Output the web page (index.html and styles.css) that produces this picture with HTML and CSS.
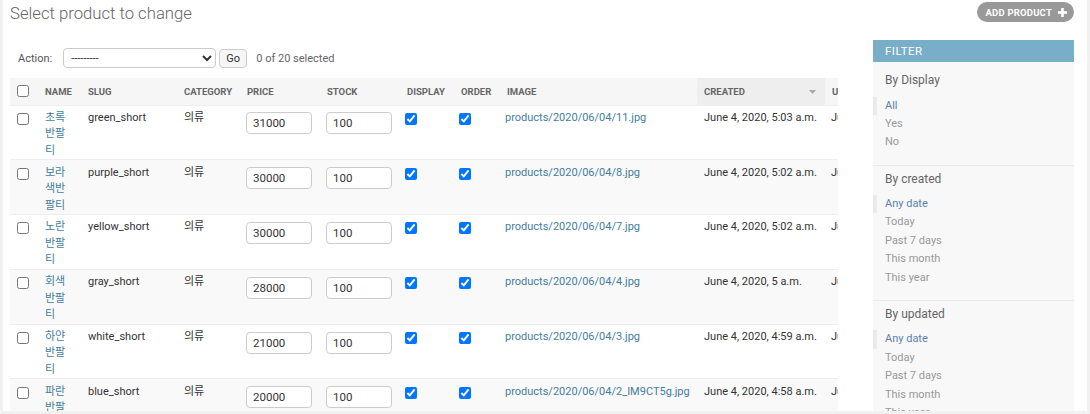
FILE: index.html
```html
<!DOCTYPE html>
<html lang="en">
<head>
<meta charset="utf-8">
<title>Select product to change</title>
<link rel="stylesheet" href="styles.css">
</head>
<body>
<div class="page">
  <div class="topbar">
    <h1 class="title">Select product to change</h1>
    <a class="addlink" href="#">ADD PRODUCT
      <svg class="plus" width="9" height="9" viewBox="0 0 9 9"><rect x="3.2" y="0" width="2.6" height="9" fill="#fff"/><rect x="0" y="3.2" width="9" height="2.6" fill="#fff"/></svg>
    </a>
  </div>
  <div class="main">
    <div class="changelist">
      <div class="actions">
        <label class="action-label">Action:</label>
        <select class="action-select"><option>---------</option></select>
        <button class="go">Go</button>
        <span class="count">0 of 20 selected</span>
      </div>
      <div class="results">
        <table class="result-list">
          <colgroup>
            <col class="c-check"><col class="c-name"><col class="c-slug"><col class="c-cat"><col class="c-price"><col class="c-stock"><col class="c-disp"><col class="c-order"><col class="c-image"><col class="c-created"><col class="c-updated">
          </colgroup>
          <thead>
            <tr>
              <th><input type="checkbox" class="cb"></th>
              <th>Name</th>
              <th>Slug</th>
              <th>Category</th>
              <th>Price</th>
              <th>Stock</th>
              <th>Display</th>
              <th>Order</th>
              <th>Image</th>
              <th class="sorted"><div class="sorted-inner"><span>Created</span><svg width="7" height="4" viewBox="0 0 7 4"><path d="M0 0H7L3.5 4Z" fill="#aaa"/></svg></div></th>
              <th>Updated</th>
            </tr>
          </thead>
          <tbody>
            <tr>
              <td><input type="checkbox" class="cb row-cb"></td>
              <td><a class="link name" href="#">초록 반팔 티</a></td>
              <td>green_short</td>
              <td>의류</td>
              <td><input class="num" type="text" value="31000"></td>
              <td><input class="num" type="text" value="100"></td>
              <td><input type="checkbox" class="cb flag" checked></td>
              <td><input type="checkbox" class="cb flag" checked></td>
              <td><a class="link img" href="#">products/2020/06/04/11.jpg</a></td>
              <td>June 4, 2020, 5:03 a.m.</td>
              <td class="upd">June 4, 2020, 5:03 a.m.</td>
            </tr>
            <tr>
              <td><input type="checkbox" class="cb row-cb"></td>
              <td><a class="link name" href="#">보라색반팔티</a></td>
              <td>purple_short</td>
              <td>의류</td>
              <td><input class="num" type="text" value="30000"></td>
              <td><input class="num" type="text" value="100"></td>
              <td><input type="checkbox" class="cb flag" checked></td>
              <td><input type="checkbox" class="cb flag" checked></td>
              <td><a class="link img" href="#">products/2020/06/04/8.jpg</a></td>
              <td>June 4, 2020, 5:02 a.m.</td>
              <td class="upd">June 4, 2020, 5:02 a.m.</td>
            </tr>
            <tr>
              <td><input type="checkbox" class="cb row-cb"></td>
              <td><a class="link name" href="#">노란 반팔 티</a></td>
              <td>yellow_short</td>
              <td>의류</td>
              <td><input class="num" type="text" value="30000"></td>
              <td><input class="num" type="text" value="100"></td>
              <td><input type="checkbox" class="cb flag" checked></td>
              <td><input type="checkbox" class="cb flag" checked></td>
              <td><a class="link img" href="#">products/2020/06/04/7.jpg</a></td>
              <td>June 4, 2020, 5:02 a.m.</td>
              <td class="upd">June 4, 2020, 5:02 a.m.</td>
            </tr>
            <tr>
              <td><input type="checkbox" class="cb row-cb"></td>
              <td><a class="link name" href="#">회색 반팔 티</a></td>
              <td>gray_short</td>
              <td>의류</td>
              <td><input class="num" type="text" value="28000"></td>
              <td><input class="num" type="text" value="100"></td>
              <td><input type="checkbox" class="cb flag" checked></td>
              <td><input type="checkbox" class="cb flag" checked></td>
              <td><a class="link img" href="#">products/2020/06/04/4.jpg</a></td>
              <td>June 4, 2020, 5 a.m.</td>
              <td class="upd">June 4, 2020, 5 a.m.</td>
            </tr>
            <tr>
              <td><input type="checkbox" class="cb row-cb"></td>
              <td><a class="link name" href="#">하얀 반팔 티</a></td>
              <td>white_short</td>
              <td>의류</td>
              <td><input class="num" type="text" value="21000"></td>
              <td><input class="num" type="text" value="100"></td>
              <td><input type="checkbox" class="cb flag" checked></td>
              <td><input type="checkbox" class="cb flag" checked></td>
              <td><a class="link img" href="#">products/2020/06/04/3.jpg</a></td>
              <td>June 4, 2020, 4:59 a.m.</td>
              <td class="upd">June 4, 2020, 4:59 a.m.</td>
            </tr>
            <tr>
              <td><input type="checkbox" class="cb row-cb"></td>
              <td><a class="link name" href="#">파란 반팔 티</a></td>
              <td>blue_short</td>
              <td>의류</td>
              <td><input class="num" type="text" value="20000"></td>
              <td><input class="num" type="text" value="100"></td>
              <td><input type="checkbox" class="cb flag" checked></td>
              <td><input type="checkbox" class="cb flag" checked></td>
              <td><a class="link img" href="#">products/2020/06/04/2_IM9CT5g.jpg</a></td>
              <td>June 4, 2020, 4:58 a.m.</td>
              <td class="upd">June 4, 2020, 4:58 a.m.</td>
            </tr>
          </tbody>
        </table>
      </div>
    </div>
    <div class="filter">
      <h2 class="filter-title">Filter</h2>
      <h3 class="filter-head first">By Display</h3>
      <ul class="filter-list">
        <li class="selected"><a href="#">All</a></li>
        <li><a href="#">Yes</a></li>
        <li><a href="#">No</a></li>
      </ul>
      <h3 class="filter-head">By created</h3>
      <ul class="filter-list">
        <li class="selected"><a href="#">Any date</a></li>
        <li><a href="#">Today</a></li>
        <li><a href="#">Past 7 days</a></li>
        <li><a href="#">This month</a></li>
        <li><a href="#">This year</a></li>
      </ul>
      <h3 class="filter-head">By updated</h3>
      <ul class="filter-list">
        <li class="selected"><a href="#">Any date</a></li>
        <li><a href="#">Today</a></li>
        <li><a href="#">Past 7 days</a></li>
        <li><a href="#">This month</a></li>
        <li><a href="#">This year</a></li>
      </ul>
    </div>
  </div>
</div>
</body>
</html>
```
FILE: styles.css
```css
* { box-sizing: border-box; }
html, body { margin: 0; padding: 0; }
body {
  background: #f1f1f1;
  font-family: Roboto, "Noto Sans CJK KR", sans-serif;
  color: #333;
}
.page {
  margin-left: 3px;
  width: 1084px;
  height: 411px;
  background: #fff;
  overflow: hidden;
  padding: 0 13px 0 7px;
}
.topbar {
  display: flex;
  justify-content: space-between;
  align-items: flex-start;
  height: 40px;
}
.title {
  margin: 0;
  padding-top: 2px;
  font-size: 16.7px;
  line-height: 24px;
  font-weight: 300;
  color: #666;
}
.addlink {
  margin-top: 2px;
  height: 20px;
  display: inline-flex;
  align-items: center;
  gap: 6px;
  padding: 0 7px 0 9px;
  border-radius: 10px;
  background: #999;
  color: #fff;
  font-size: 9.5px;
  font-weight: 700;
  letter-spacing: 0.2px;
  text-decoration: none;
}
.plus { display: block; }
.main {
  display: flex;
  align-items: flex-start;
  gap: 35px;
}
.changelist {
  width: 828px;
  flex: none;
}
.actions {
  display: flex;
  align-items: center;
  height: 20px;
  margin-top: 8px;
  padding-left: 8px;
  font-size: 11px;
  color: #555;
}
.action-label { margin-right: 11px; }
.action-select {
  width: 153px;
  height: 20px;
  border: 1px solid #ccc;
  border-radius: 4px;
  background: #fff;
  font-family: Roboto, sans-serif;
  font-size: 11px;
  color: #333;
  padding: 0 3px;
  margin: 0;
}
.go {
  margin: 0 0 0 3px;
  width: 28px;
  height: 19px;
  border: 1px solid #ccc;
  border-radius: 4px;
  background: #f6f6f6;
  font-family: Roboto, sans-serif;
  font-size: 11px;
  color: #333;
  padding: 0;
}
.count { margin-left: 9px; color: #666; }
.results {
  margin-top: 10px;
  overflow: hidden;
}
.result-list {
  border-collapse: collapse;
  table-layout: fixed;
  width: 945px;
  font-size: 11px;
}
.c-check { width: 28px; }
.c-name { width: 43px; }
.c-slug { width: 96px; }
.c-cat { width: 63px; }
.c-price { width: 80px; }
.c-stock { width: 80px; }
.c-disp { width: 54px; }
.c-order { width: 46px; }
.c-image { width: 197px; }
.c-created { width: 128px; }
.c-updated { width: 130px; }
.result-list th {
  height: 27px;
  padding: 0 7px;
  background: #f6f6f6;
  border-bottom: 1px solid #eee;
  font-size: 9.5px;
  font-weight: 700;
  color: #666;
  text-align: left;
  text-transform: uppercase;
  vertical-align: middle;
  white-space: nowrap;
}
.result-list th.sorted { background: #eee; }
.sorted-inner {
  display: flex;
  align-items: center;
  justify-content: space-between;
  padding-right: 2px;
}
.sorted-inner svg { display: block; margin-top: 2px; }
.result-list td {
  padding: 4.3px 7px 0;
  vertical-align: top;
  line-height: 16.5px;
  border-bottom: 1px solid #eee;
  white-space: nowrap;
  overflow: hidden;
}
.result-list td.upd { padding-left: 6px; }
.result-list td:nth-child(2) { white-space: normal; }
.result-list tbody tr:nth-child(even) td { background: #f9f9f9; }
.cb {
  width: 12px;
  height: 12px;
  margin: 0;
  display: block;
}
.row-cb { margin-top: 3px; }
.flag { margin: 3px 0 0 -2px; }
.link { color: #447e9b; text-decoration: none; }
.name { display: block; }
.img { margin-left: -2px; }
.num {
  display: block;
  width: 66px;
  height: 22px;
  margin: 2.7px 0 0 -1px;
  padding: 0 6px;
  border: 1px solid #ccc;
  border-radius: 4px;
  font-family: Roboto, sans-serif;
  font-size: 11.5px;
  color: #333;
  background: #fff;
}
.filter {
  width: 201px;
  flex: none;
  height: 371px;
  background: #f8f8f8;
}
.filter-title {
  margin: 0;
  height: 22px;
  line-height: 22px;
  padding-left: 12px;
  background: #79aec8;
  color: #fff;
  font-size: 11.5px;
  font-weight: 400;
  letter-spacing: 0.5px;
  text-transform: uppercase;
}
.filter-head {
  margin: 4.5px 0 0;
  padding-left: 12px;
  font-size: 12px;
  line-height: 16px;
  font-weight: 400;
  color: #666;
}
.filter-head.first { margin-top: 10px; }
.filter-list {
  list-style: none;
  margin: 8.5px 0 0;
  padding: 0 0 13.3px;
  border-bottom: 1px solid #eaeaea;
}
.filter-list li {
  line-height: 18.4px;
  padding-left: 12px;
  font-size: 11px;
}
.filter-list li a { color: #999; text-decoration: none; }
.filter-list li.selected {
  border-left: 4px solid #eaeaea;
  padding-left: 8px;
}
.filter-list li.selected a { color: #5b80b2; }
```
